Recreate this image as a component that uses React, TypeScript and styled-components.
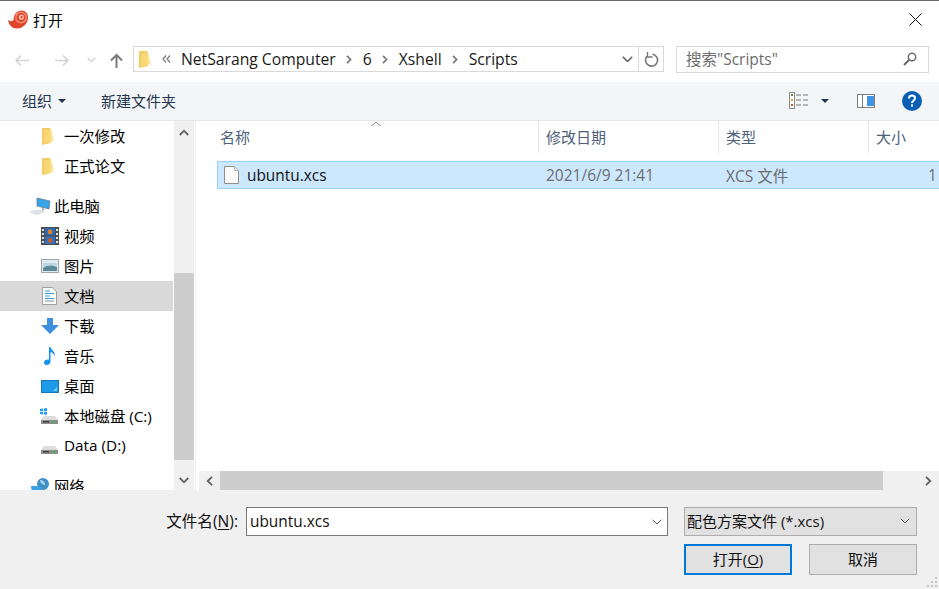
import React from "react";
import styled, { createGlobalStyle } from "styled-components";

const Global = createGlobalStyle`
  html, body { margin: 0; padding: 0; background: #fff; }
  #root { width: 939px; height: 589px; overflow: hidden; }
  * { box-sizing: border-box; }
`;
const F = `"Open Sans", "Noto Sans CJK SC", sans-serif`;

const Dialog = styled.div`
  width: 939px; height: 589px; display: flex; flex-direction: column;
  font-family: ${F}; font-size: 15px; color: #000; background: #fff;
  border-top: 1px solid #6a6a6a; overflow: hidden;
`;
const TitleBar = styled.div`
  height: 39px; display: flex; align-items: center; padding: 0 17px 2px 8px; flex: none;
`;
const TitleText = styled.span`margin-left: 5px; font-size: 15px; padding-bottom: 1px;`;
const CloseBtn = styled.span`margin-left: auto; display: flex;`;
const AddressRow = styled.div`
  height: 42px; display: flex; align-items: flex-start; flex: none; padding: 6px 10px 0 0;
`;
const NavBtn = styled.span<{ $w: number }>`
  width: ${(p) => p.$w}px; height: 28px; display: flex; align-items: center; justify-content: center; flex: none;
`;
const AddressBox = styled.div`
  width: 531px; height: 26px; margin-left: 3px; border: 1px solid #d9d9d9; display: flex; align-items: center; flex: none;
`;
const Crumbs = styled.div`
  flex: 1; display: flex; align-items: center; padding-left: 5px; min-width: 0; white-space: nowrap; color: #1a1a1a;
`;
const Crumb = styled.span`font-size: 15.7px; line-height: 24px;`;
const CrumbSep = styled.span<{ $w: number }>`display: flex; width: ${(p) => p.$w}px; justify-content: center; flex: none;`;
const RefreshCell = styled.span`
  width: 25px; height: 24px; border-left: 1px solid #d9d9d9; display: flex; align-items: center; justify-content: center; flex: none;
`;
const DropCell = styled.span`width: 22px; display: flex; justify-content: center; flex: none;`;
const SearchBox = styled.div`
  width: 253px; height: 27px; margin-left: 12px; border: 1px solid #d9d9d9; display: flex; align-items: center;
  padding: 0 11px 2px 9px; color: #6d6d6d; font-size: 15.5px; justify-content: space-between; flex: none;
`;
const Toolbar = styled.div`
  height: 39px; background: #f4f5f7; border-bottom: 1px solid #e6e6e6; display: flex; align-items: center;
  padding: 0 17px 1px 22px; color: #24364f; flex: none; font-size: 15px;
`;
const ToolLabel = styled.span`display: flex; align-items: center; gap: 6px;`;
const ToolSpacer = styled.span<{ $w: number }>`width: ${(p) => p.$w}px; flex: none;`;
const ToolRight = styled.div`margin-left: auto; display: flex; align-items: center;`;
const Main = styled.div`flex: 1; display: flex; min-height: 0;`;
const Side = styled.div`
  width: 173px; height: 369px; overflow: hidden; flex: none;
`;
const SideRow = styled.div<{ $indent: number; $active?: boolean; $gapTop?: boolean }>`
  height: 30px; display: flex; align-items: center; padding-left: ${(p) => p.$indent}px;
  background: ${(p) => (p.$active ? "#d9d9d9" : "transparent")}; font-size: 15.3px;
  margin-top: ${(p) => (p.$gapTop ? "10px" : 0)}; white-space: nowrap; gap: ${(p) => (p.$indent < 35 ? 3 : 5)}px;
`;
const SideIcon = styled.span<{ $w: number }>`
  width: ${(p) => p.$w}px; height: 20px; display: flex; align-items: center; justify-content: center; flex: none;
`;
const SideText = styled.span`padding-bottom: 2px;`;
const FolderLabel = styled(SideText)`margin-left: 5px;`;
const VScroll = styled.div`
  width: 20px; margin-left: 1px; height: 369px; background: #f0f0f0; display: flex; flex-direction: column; flex: none;
`;
const ScrollBtn = styled.span<{ $h: number }>`height: ${(p) => p.$h}px; display: flex; align-items: center; justify-content: center; flex: none;`;
const VTrack = styled.div`flex: 1; padding-top: 130px;`;
const VThumb = styled.div`width: 100%; height: 187px; background: #cdcdcd;`;
const Divider = styled.div`
  width: 5px; flex: none; background: #fff; box-shadow: inset -3px 0 0 #fff, inset -4px 0 0 #f0f0f0;
`;
const ListPane = styled.div`flex: 1; display: flex; flex-direction: column; min-width: 0; position: relative;`;
const ListBody = styled.div`flex: 1; min-height: 0;`;
const Header = styled.div`height: 33px; display: flex; color: #4c607a; font-size: 15px; position: relative;`;
const HeadCell = styled.div<{ $w: number; $pl: number; $line?: boolean }>`
  width: ${(p) => p.$w}px; flex: none; padding-left: ${(p) => p.$pl}px; line-height: 32px; height: 32px;
  border-right: ${(p) => (p.$line ? "1px solid #e5e5e5" : "none")};
`;
const SortCaret = styled.span`position: absolute; left: 172px; top: 0; display: flex;`;
const FileRow = styled.div`
  margin: 7px 0 0 18px; height: 28px; background: #cce8ff; border: 1px solid #99d1ff; border-right: 0; display: flex; align-items: center;
  color: #6d6d6d; white-space: nowrap;
`;
const FileName = styled.span`
  width: 328px; flex: none; padding-left: 6px; display: flex; align-items: center; gap: 8px; color: #111; font-size: 15.4px;
`;
const FileCell = styled.span<{ $w: number }>`width: ${(p) => p.$w}px; flex: none; font-size: 15.5px;`;
const HScroll = styled.div`height: 19px; background: #f0f0f0; display: flex; flex: none;`;
const HBtn = styled.span`width: 21px; display: flex; align-items: center; justify-content: center; flex: none;`;
const HTrack = styled.div`flex: 1; display: flex; padding-right: 35px;`;
const HThumb = styled.div`flex: 1; background: #cdcdcd;`;
const Footer = styled.div`
  height: 99px; background: #f0f0f0; flex: none; position: relative; padding: 17px 22px 0 0;
  display: flex; flex-direction: column; gap: 8px;
`;
const FieldRow = styled.div`display: flex; align-items: center; justify-content: flex-end; height: 29px;`;
const Label = styled.span`margin-right: 8px; font-size: 15.6px; color: #111; white-space: nowrap; padding-bottom: 2px;`;
const U = styled.u`text-underline-offset: 2px;`;
const NameInput = styled.div`
  width: 422px; height: 29px; background: #fff; border: 1px solid #7a7a7a; display: flex; align-items: center;
  justify-content: space-between; padding: 0 5px 0 3px; color: #111; font-size: 15.4px;
`;
const TypeSelect = styled.div`
  width: 233px; height: 29px; margin-left: 16px; background: #e1e1e1; border: 1px solid #adadad; display: flex; align-items: center;
  justify-content: space-between; padding: 0 6px 2px 2px; font-size: 15px; color: #111;
`;
const ButtonRow = styled.div`display: flex; justify-content: flex-end; gap: 17px;`;
const Btn = styled.div<{ $primary?: boolean }>`
  width: 108px; height: 31px; background: #e1e1e1; display: flex; align-items: center; justify-content: center; padding-bottom: 3px;
  border: ${(p) => (p.$primary ? "2px solid #0078d7" : "1px solid #adadad")}; color: #111; font-size: 15px;
`;
const Grip = styled.svg`position: absolute; right: 1px; bottom: 1px;`;

const Snail = () => (
  <svg width="20" height="19" viewBox="0 0 20 19">
    <path d="M0 10c2 1.500 4.500 1.500 5.500 0C6 4 9 .5 13.500.5 17.500.5 20 3.500 20 7.500c0 6-5 11-11 11-5 0-8-3.500-9-8.500z" fill="#e0452b" />
    <circle cx="13" cy="7.500" r="6" fill="#f08a72" />
    <circle cx="13" cy="7.500" r="4.400" fill="#e0452b" />
    <circle cx="13.400" cy="7.200" r="2.600" fill="#f6b8a6" />
    <circle cx="13.800" cy="7" r="1.100" fill="#e0452b" />
  </svg>
);
const Close = () => (
  <svg width="13" height="13" viewBox="0 0 13 13"><path d="M.5.500l12 12M12.500.500l-12 12" stroke="#111" fill="none" /></svg>
);
const Arrow = ({ dir, color }: { dir: "l" | "r"; color: string }) => (
  <svg width="16" height="13" viewBox="0 0 16 13" style={{ transform: dir === "r" ? "scaleX(-1)" : undefined }}>
    <path d="M15 6.500H2M7 1.500l-5 5 5 5" stroke={color} strokeWidth="1.600" fill="none" />
  </svg>
);
const Up = () => (
  <svg width="13" height="15" viewBox="0 0 13 15"><path d="M6.500 15V2M1 7.500l5.500-5.500L12 7.500" stroke="#7b7b7b" strokeWidth="2" fill="none" /></svg>
);
const Chevron = ({ size = 9, color = "#6b6b6b", w = 1.5 }: { size?: number; color?: string; w?: number }) => (
  <svg width={size} height={size * 0.6} viewBox="0 0 10 6"><path d="M.7.7L5 5l4.300-4.300" stroke={color} strokeWidth={w} fill="none" /></svg>
);
const SideScrollArrow = ({ up }: { up?: boolean }) => (
  <svg width="10" height="7" viewBox="0 0 10 7" style={{ transform: up ? "scaleY(-1)" : undefined }}>
    <path d="M.8 1L5 5.300 9.200 1" stroke="#606060" strokeWidth="1.800" fill="none" />
  </svg>
);
const HArrow = ({ right }: { right?: boolean }) => (
  <svg width="7" height="10" viewBox="0 0 7 10" style={{ transform: right ? "scaleX(-1)" : undefined }}>
    <path d="M6 .8L1.700 5 6 9.200" stroke="#606060" strokeWidth="1.800" fill="none" />
  </svg>
);
const Folder = () => (
  <svg width="12" height="17" viewBox="0 0 12 17">
    <path d="M0 0h8l1 2v13l-9 2z" fill="#f3cd62" />
    <path d="M3 3h6.500L12 13.500H3z" fill="#fbe39a" />
    <path d="M2 2h6.500v13H2z" fill="#f8d775" />
  </svg>
);
const DoubleLeft = () => (
  <svg width="9" height="8" viewBox="0 0 9 8"><path d="M4 .5L1 4l3 3.500M8 .5L5 4l3 3.500" stroke="#777" strokeWidth="1.200" fill="none" /></svg>
);
const CrumbArrow = () => (
  <svg width="6" height="9" viewBox="0 0 6 9"><path d="M1 .8L4.600 4.500 1 8.200" stroke="#777" strokeWidth="1.700" fill="none" /></svg>
);
const Refresh = () => (
  <svg width="15" height="15" viewBox="0 0 15 15">
    <path d="M8.500 2.200A6 6 0 1 1 3 4.200" stroke="#777" strokeWidth="1.600" fill="none" />
    <path d="M3.500 0v5h5" stroke="#777" strokeWidth="1.400" fill="none" />
  </svg>
);
const Search = () => (
  <svg width="14" height="14" viewBox="0 0 14 14">
    <circle cx="9" cy="5" r="3.700" stroke="#6b6b6b" strokeWidth="1.500" fill="none" />
    <path d="M6 8l-5 5" stroke="#6b6b6b" strokeWidth="2.200" />
  </svg>
);
const Caret = () => (
  <svg width="8" height="4" viewBox="0 0 8 4"><path d="M0 0h8L4 4z" fill="#1f3553" /></svg>
);
const ViewIcon = () => (
  <svg width="19" height="17" viewBox="0 0 19 17">
    <rect x=".5" y=".5" width="5" height="16" fill="#fff" stroke="#8a8a8a" />
    <rect x="2" y="2" width="2" height="2" fill="#6a8f55" />
    <rect x="2" y="7" width="2" height="2" fill="#cda83b" />
    <rect x="2" y="12" width="2" height="2" fill="#c05b3a" />
    <path d="M7 3h5M14 3h5M7 8h5M14 8h5M7 13h5M14 13h5" stroke="#777" />
  </svg>
);
const PaneIcon = () => (
  <svg width="18" height="14" viewBox="0 0 18 14">
    <rect x=".5" y=".5" width="17" height="13" fill="#fff" stroke="#7d7d7d" />
    <rect x="5" y="1" width="1" height="12" fill="#7d7d7d" />
    <rect x="10" y="2" width="7" height="10" fill="#3f96e4" />
  </svg>
);
const Help = () => (
  <svg width="20" height="20" viewBox="0 0 20 20">
    <circle cx="10" cy="10" r="10" fill="#0a5fb4" />
    <path d="M7 7.500C7 5.500 8.500 4.500 10 4.500s3 1 3 2.700c0 2.300-3 2.300-3 4.800" stroke="#fff" strokeWidth="2" fill="none" />
    <rect x="9" y="13.400" width="2" height="2.200" fill="#fff" />
  </svg>
);
const PC = () => (
  <svg width="21" height="18" viewBox="0 0 21 18">
    <path d="M7 1l13 3-1 8-12-3z" fill="#35a4ea" stroke="#6d7d8a" strokeWidth=".8" />
    <path d="M12 11l2 .5v2l-2-.3z" fill="#9aa3aa" />
    <path d="M0 15l8-2 6 1.500-7 3z" fill="#dfe3e6" stroke="#c4c9cc" strokeWidth=".5" />
  </svg>
);
const Video = () => (
  <svg width="18" height="18" viewBox="0 0 18 18">
    <rect width="18" height="18" fill="#4b4b4b" />
    <path d="M1 2h2v2H1zM1 6h2v2H1zM1 10h2v2H1zM1 14h2v2H1zM15 2h2v2h-2zM15 6h2v2h-2zM15 10h2v2h-2zM15 14h2v2h-2z" fill="#e3e3e3" />
    <rect x="4" y="1" width="10" height="7.500" fill="#2d68b5" />
    <rect x="4" y="9.500" width="10" height="7.500" fill="#2f71c0" />
    <circle cx="9" cy="5" r="2.400" fill="#d9812e" />
    <circle cx="9" cy="13.500" r="2.400" fill="#c45c2e" />
  </svg>
);
const Picture = () => (
  <svg width="18" height="14" viewBox="0 0 18 14">
    <rect x=".5" y=".5" width="17" height="13" fill="#dfeaf2" stroke="#a5a5a5" />
    <path d="M2 9c4-3 9-3 14-1v4H2z" fill="#5d8a96" />
    <path d="M2 4h14v3c-4-1.600-9-1.400-14 1z" fill="#b9d5e6" />
  </svg>
);
const Doc = () => (
  <svg width="15" height="18" viewBox="0 0 15 18">
    <path d="M.5.500h10l4 4v13H.5z" fill="#fff" stroke="#a0a0a0" />
    <path d="M3 4h5M3 6.500h9M3 9h5M3 11.500h9" stroke="#2f9be3" strokeWidth="1.200" />
    <path d="M3 14h9" stroke="#8a8a8a" />
  </svg>
);
const Down = () => (
  <svg width="18" height="16" viewBox="0 0 18 16"><path d="M6 0h6v7h6l-9 9-9-9h6z" fill="#3d8fe0" /></svg>
);
const Music = () => (
  <svg width="12" height="18" viewBox="0 0 12 18">
    <path d="M5 0h1.500c.4 3 5.500 4.500 4 9.500C10 6.500 8 5.500 6.500 5v9.500C6.500 17 4.500 18 2.500 18S0 16.500 0 15.200C0 13.500 2.500 12 5 12.500z" fill="#1793e8" />
  </svg>
);
const Desktop = () => (
  <svg width="18" height="13" viewBox="0 0 18 13">
    <rect x=".5" y=".5" width="17" height="12" fill="#1d9be8" stroke="#1577c0" />
    <path d="M12 11l4-4v4z" fill="#7cc8f3" />
  </svg>
);
const Disk = ({ win }: { win?: boolean }) => (
  <svg width="19" height="17" viewBox="0 0 19 17">
    {win && <path d="M0 1l3-.5V3H0zM3.800.4L7 0v3H3.800zM0 3.800h3v2.600L0 6zM3.800 3.800H7v3l-3.200-.4z" fill="#26a0ea" />}
    <path d="M1 12l3-4h11l3 4z" fill="#dcdcdc" />
    <rect x="1" y="12" width="17" height="4" fill="#8d8d8d" />
    <rect x="12" y="13" width="3" height="1.500" fill="#3ec34a" />
    <rect x="3" y="13" width="6" height="1.500" fill="#444" />
  </svg>
);
const Net = () => (
  <svg width="19" height="17" viewBox="0 0 19 17">
    <circle cx="12" cy="6" r="6" fill="#3f8fc4" />
    <path d="M9 2c3 0 5 2 5 5-2 0-5-2-5-5z" fill="#a7d3ec" />
    <path d="M0 8h6l1 1h4v7H1z" fill="#3aa0e2" />
  </svg>
);
const FileIcon = () => (
  <svg width="15" height="18" viewBox="0 0 15 18">
    <path d="M.5.500h10l4 4v13H.5z" fill="#fafafa" stroke="#8f8f8f" />
    <path d="M10.500.500v4h4" fill="#e6e6e6" stroke="#bbb" />
  </svg>
);

export default function App() {
  return (
    <Dialog>
      <Global />
      <TitleBar>
        <Snail />
        <TitleText>打开</TitleText>
        <CloseBtn><Close /></CloseBtn>
      </TitleBar>
      <AddressRow>
        <NavBtn $w={44}><Arrow dir="l" color="#d3d3d3" /></NavBtn>
        <NavBtn $w={36}><Arrow dir="r" color="#d3d3d3" /></NavBtn>
        <NavBtn $w={22}><Chevron color="#d3d3d3" /></NavBtn>
        <NavBtn $w={28}><Up /></NavBtn>
        <AddressBox>
          <Crumbs>
            <Folder />
            <CrumbSep $w={30}><DoubleLeft /></CrumbSep>
            <Crumb>NetSarang Computer</Crumb>
            <CrumbSep $w={27}><CrumbArrow /></CrumbSep>
            <Crumb>6</Crumb>
            <CrumbSep $w={27}><CrumbArrow /></CrumbSep>
            <Crumb>Xshell</Crumb>
            <CrumbSep $w={27}><CrumbArrow /></CrumbSep>
            <Crumb>Scripts</Crumb>
          </Crumbs>
          <DropCell><Chevron size={11} color="#606060" w={1.4} /></DropCell>
          <RefreshCell><Refresh /></RefreshCell>
        </AddressBox>
        <SearchBox>
          <span>搜索"Scripts"</span>
          <Search />
        </SearchBox>
      </AddressRow>
      <Toolbar>
        <ToolLabel>组织 <Caret /></ToolLabel>
        <ToolSpacer $w={35} />
        <span>新建文件夹</span>
        <ToolRight>
          <ViewIcon />
          <ToolSpacer $w={13} />
          <Caret />
          <ToolSpacer $w={28} />
          <PaneIcon />
          <ToolSpacer $w={27} />
          <Help />
        </ToolRight>
      </Toolbar>
      <Main>
        <Side>
          <SideRow $indent={41}><SideIcon $w={13}><Folder /></SideIcon><FolderLabel>一次修改</FolderLabel></SideRow>
          <SideRow $indent={41}><SideIcon $w={13}><Folder /></SideIcon><FolderLabel>正式论文</FolderLabel></SideRow>
          <SideRow $indent={30} $gapTop><SideIcon $w={21}><PC /></SideIcon><SideText>此电脑</SideText></SideRow>
          <SideRow $indent={40}><SideIcon $w={19}><Video /></SideIcon><SideText>视频</SideText></SideRow>
          <SideRow $indent={40}><SideIcon $w={19}><Picture /></SideIcon><SideText>图片</SideText></SideRow>
          <SideRow $indent={40} $active><SideIcon $w={19}><Doc /></SideIcon><SideText>文档</SideText></SideRow>
          <SideRow $indent={40}><SideIcon $w={19}><Down /></SideIcon><SideText>下载</SideText></SideRow>
          <SideRow $indent={40}><SideIcon $w={19}><Music /></SideIcon><SideText>音乐</SideText></SideRow>
          <SideRow $indent={40}><SideIcon $w={19}><Desktop /></SideIcon><SideText>桌面</SideText></SideRow>
          <SideRow $indent={40}><SideIcon $w={19}><Disk win /></SideIcon><SideText>本地磁盘 (C:)</SideText></SideRow>
          <SideRow $indent={40}><SideIcon $w={19}><Disk /></SideIcon><SideText>Data (D:)</SideText></SideRow>
          <SideRow $indent={30} $gapTop><SideIcon $w={21}><Net /></SideIcon><SideText>网络</SideText></SideRow>
        </Side>
        <VScroll>
          <ScrollBtn $h={22}><SideScrollArrow up /></ScrollBtn>
          <VTrack><VThumb /></VTrack>
          <ScrollBtn $h={19}><SideScrollArrow /></ScrollBtn>
        </VScroll>
        <Divider />
        <ListPane>
          <ListBody>
            <Header>
              <SortCaret><svg width="10" height="6" viewBox="0 0 10 6"><path d="M.5 5L5 1l4.500 4" stroke="#8a8a8a" fill="none" /></svg></SortCaret>
              <HeadCell $w={340} $pl={21} $line>名称</HeadCell>
              <HeadCell $w={180} $pl={7} $line>修改日期</HeadCell>
              <HeadCell $w={150} $pl={7} $line>类型</HeadCell>
              <HeadCell $w={70} $pl={7}>大小</HeadCell>
            </Header>
            <FileRow>
              <FileName><FileIcon /><span>ubuntu.xcs</span></FileName>
              <FileCell $w={180}>2021/6/9 21:41</FileCell>
              <FileCell $w={202}>XCS 文件</FileCell>
              <FileCell $w={10}>1</FileCell>
            </FileRow>
          </ListBody>
          <HScroll>
            <HBtn><HArrow /></HBtn>
            <HTrack><HThumb /></HTrack>
            <HBtn><HArrow right /></HBtn>
          </HScroll>
        </ListPane>
      </Main>
      <Footer>
        <FieldRow>
          <Label>文件名(<U>N</U>):</Label>
          <NameInput><span>ubuntu.xcs</span><Chevron size={10} color="#606060" w={1} /></NameInput>
          <TypeSelect><span>配色方案文件 (*.xcs)</span><Chevron size={10} color="#606060" w={1} /></TypeSelect>
        </FieldRow>
        <ButtonRow>
          <Btn $primary><span>打开(<U>O</U>)</span></Btn>
          <Btn>取消</Btn>
        </ButtonRow>
        <Grip width="12" height="12" viewBox="0 0 12 12">
          <path d="M9 1h2v2H9zM5 5h2v2H5zM9 5h2v2H9zM1 9h2v2H1zM5 9h2v2H5zM9 9h2v2H9z" fill="#c4c4c4" />
        </Grip>
      </Footer>
    </Dialog>
  );
}
